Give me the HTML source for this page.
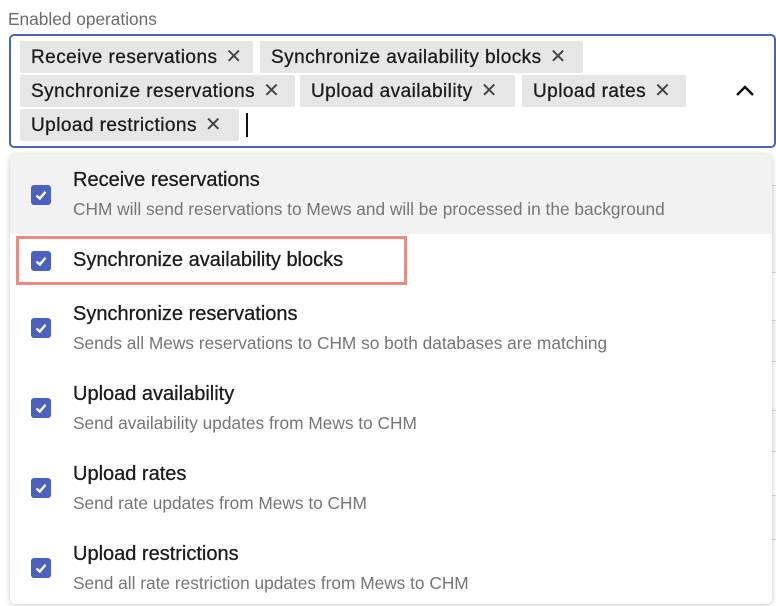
<!DOCTYPE html>
<html><head><meta charset="utf-8"><style>
*{box-sizing:border-box;margin:0;padding:0}
body{width:776px;height:606px;background:#fff;font-family:"Liberation Sans",sans-serif;position:relative;overflow:hidden;color:#1c1c1c}
.abs{position:absolute}
.lbl{left:8px;top:9px;font-size:17.3px;color:#6b6b6b}
.box{left:9px;top:34px;width:767px;height:114px;border:2px solid #4b60c0;border-radius:5px}
.tag{position:absolute;height:32px;background:#e6e6e6;border-radius:2px;font-size:19px;letter-spacing:0.45px;line-height:32px;padding-left:11px;white-space:nowrap;color:#1c1c1c;-webkit-text-stroke:0.3px #1c1c1c}
.tag span{color:#444;font-size:20px;margin-left:8px;-webkit-text-stroke:0}
.bg{position:absolute;border:1px solid #d6d6d6;border-radius:6px;background:#fafafa}
.dd{left:10px;top:154px;width:762px;height:450px;background:#fff;border-radius:6px;box-shadow:0 1px 6px rgba(0,0,0,.22)}
.cb{position:absolute;left:31px;width:20px;height:20px;background:#4b60c0;border-radius:3px}
.cb svg{position:absolute;left:3px;top:3px}
.t{position:absolute;left:73px;font-size:20px;color:#1c1c1c;white-space:nowrap;-webkit-text-stroke:0.3px #1c1c1c}
.d{position:absolute;left:73px;font-size:17.3px;color:#757575;white-space:nowrap}
</style></head><body>
<div class="abs lbl">Enabled operations</div>
<div class="bg" style="left:765px;top:185px;width:30px;height:88px"></div>
<div class="bg" style="left:765px;top:320px;width:30px;height:42px"></div>
<div class="bg" style="left:765px;top:410px;width:30px;height:42px"></div>
<div class="bg" style="left:765px;top:495px;width:30px;height:45px"></div>
<div class="abs box"></div>
<div class="tag" style="left:20px;top:41px;width:233px">Receive reservations<span>✕</span></div>
<div class="tag" style="left:260px;top:41px;width:323px">Synchronize availability blocks<span>✕</span></div>
<div class="tag" style="left:20px;top:75px;width:275px">Synchronize reservations<span>✕</span></div>
<div class="tag" style="left:300px;top:75px;width:215px">Upload availability<span>✕</span></div>
<div class="tag" style="left:522px;top:75px;width:164px">Upload rates<span>✕</span></div>
<div class="tag" style="left:20px;top:109px;width:219px">Upload restrictions<span>✕</span></div>
<div class="abs" style="left:246px;top:113px;width:2px;height:24px;background:#111"></div>
<svg class="abs" style="left:735px;top:84px" width="20" height="14" viewBox="0 0 20 14"><path d="M2 11 L10 3 L18 11" fill="none" stroke="#111" stroke-width="2.4"/></svg>
<div class="abs dd">
<div class="abs" style="left:0;top:0;width:762px;height:80px;background:#f2f2f2;border-radius:6px 6px 0 0"></div>
</div>
<div class="abs" style="left:16px;top:236px;width:391px;height:49px;border:3px solid #f08a80"></div>
<svg width="0" height="0" style="position:absolute"><defs><path id="ck" d="M2.5 7.5 L5.8 10.5 L11.5 3.8"/></defs></svg>
<div class="cb" style="top:185px"><svg width="14" height="14"><use href="#ck" fill="none" stroke="#fff" stroke-width="2.4"/></svg></div>
<div class="t" style="top:169px">Receive reservations</div>
<div class="d" style="top:199px">CHM will send reservations to Mews and will be processed in the background</div>
<div class="cb" style="top:251px"><svg width="14" height="14"><use href="#ck" fill="none" stroke="#fff" stroke-width="2.4"/></svg></div>
<div class="t" style="top:249px">Synchronize availability blocks</div>
<div class="cb" style="top:318px"><svg width="14" height="14"><use href="#ck" fill="none" stroke="#fff" stroke-width="2.4"/></svg></div>
<div class="t" style="top:303px">Synchronize reservations</div>
<div class="d" style="top:333px">Sends all Mews reservations to CHM so both databases are matching</div>
<div class="cb" style="top:398px"><svg width="14" height="14"><use href="#ck" fill="none" stroke="#fff" stroke-width="2.4"/></svg></div>
<div class="t" style="top:383px">Upload availability</div>
<div class="d" style="top:413px">Send availability updates from Mews to CHM</div>
<div class="cb" style="top:478px"><svg width="14" height="14"><use href="#ck" fill="none" stroke="#fff" stroke-width="2.4"/></svg></div>
<div class="t" style="top:463px">Upload rates</div>
<div class="d" style="top:493px">Send rate updates from Mews to CHM</div>
<div class="cb" style="top:558px"><svg width="14" height="14"><use href="#ck" fill="none" stroke="#fff" stroke-width="2.4"/></svg></div>
<div class="t" style="top:543px">Upload restrictions</div>
<div class="d" style="top:573px">Send all rate restriction updates from Mews to CHM</div>
</body></html>
